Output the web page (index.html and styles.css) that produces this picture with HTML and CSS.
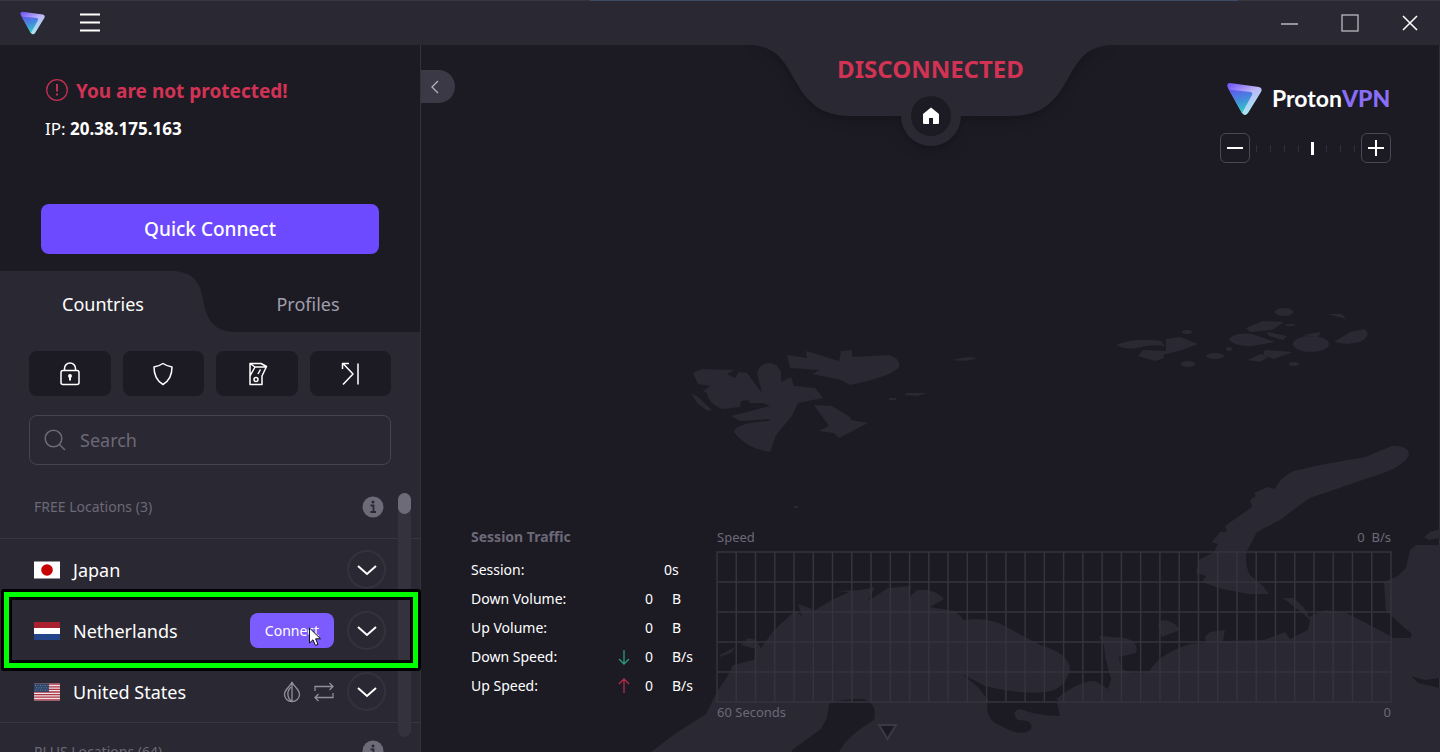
FILE: index.html
```html
<!DOCTYPE html>
<html lang="en">
<head>
<meta charset="utf-8">
<meta name="viewport" content="width=device-width, initial-scale=1">
<title>Proton VPN</title>
<link rel="stylesheet" href="styles.css">
</head>
<body>
<svg class="defs" aria-hidden="true">
  <defs>
    <linearGradient id="rim" x1="0" y1="0" x2="0.7" y2="1">
      <stop offset="0" stop-color="#6a4df5"/><stop offset="0.5" stop-color="#bdb4f8"/><stop offset="1" stop-color="#a4f3ee"/>
    </linearGradient>
    <linearGradient id="core" x1="0.3" y1="0" x2="0.6" y2="1">
      <stop offset="0" stop-color="#6157ee"/><stop offset="0.5" stop-color="#438bdc"/><stop offset="1" stop-color="#2fd0c0"/>
    </linearGradient>
    <symbol id="logo" viewBox="0 0 36 34">
      <path d="M3 1 32 5Q36 6 34 10L21 31Q18 35 15 31L1 6Q-1 1 3 1Z" fill="url(#rim)"/>
      <path d="M1 6Q2 8 5 8L24 10Q26 11 25 13L15 31 1 6Z" fill="url(#core)"/>
    </symbol>
    <symbol id="chevron" viewBox="0 0 20 12"><path d="M1 2 10 10 19 2" fill="none" stroke="currentColor" stroke-width="2"/></symbol>
    <symbol id="info" viewBox="0 0 22 22"><circle cx="11" cy="11" r="10.500" fill="#6e6b79"/><circle cx="11" cy="6" r="1.500" fill="#2a2832"/><path d="M8.500 9.500H11.500V16M8.500 16H14" fill="none" stroke="#2a2832" stroke-width="1.800"/></symbol>
  </defs>
</svg>

<header class="titlebar">
  <svg class="app-logo"><use href="#logo"/></svg>
  <button class="plain menu" aria-label="Menu"><svg width="20" height="19" viewBox="0 0 20 19"><path d="M0 1.500H20M0 9.500H20M0 17.500H20" stroke="#fff" stroke-width="2"/></svg></button>
  <div class="window-buttons">
    <button class="plain" aria-label="Minimize"><svg width="18" height="18"><path d="M0 10H17" stroke="#b9b8c0" stroke-width="1.500"/></svg></button>
    <button class="plain" aria-label="Maximize"><svg width="18" height="18"><rect x="1" y="1" width="16" height="16" fill="none" stroke="#b9b8c0" stroke-width="1.300"/></svg></button>
    <button class="plain" aria-label="Close"><svg width="18" height="18"><path d="M2 2 16 16M16 2 2 16" stroke="#fff" stroke-width="1.500"/></svg></button>
  </div>
</header>

<div class="layout">
  <aside class="sidebar">
    <section class="status">
      <p class="warning">
        <svg width="24" height="24" viewBox="0 0 24 24"><circle cx="12" cy="11" r="10.300" fill="none" stroke="#c23050" stroke-width="1.300"/><path d="M12 5V12.500M12 14.500V16.500" stroke="#d23354" stroke-width="1.800"/></svg>
        You are not protected!
      </p>
      <p class="ip">IP: <strong>20.38.175.163</strong></p>
      <button class="quick">Quick Connect</button>
    </section>

    <div class="tabs" role="tablist">
      <svg class="tab-shape" viewBox="0 0 420 61" preserveAspectRatio="none"><path d="M0 0H172C193 1 200 10 203 29 207 49 213 59 232 61H0Z" fill="#2a2832"/></svg>
      <button class="plain tab active" role="tab" aria-selected="true">Countries</button>
      <button class="plain tab" role="tab" aria-selected="false">Profiles</button>
    </div>

    <div class="features">
      <button aria-label="Secure Core"><svg width="22" height="24" viewBox="0 0 22 24"><rect x="2" y="8.500" width="18" height="14" rx="2"/><path d="M5.500 8.500V6.500a5.500 5.500 0 0 1 11 0V8.500"/><path d="M11 13V18.500" stroke-width="2"/><circle cx="11" cy="14" r="1.200" fill="#fff"/></svg></button>
      <button aria-label="NetShield"><svg width="22" height="24" viewBox="0 0 22 24"><path d="M11 1.500C8 3.500 5 4.500 2 5C2 13 5 19 11 22.500C17 19 20 13 20 5C17 4.500 14 3.500 11 1.500Z"/></svg></button>
      <button aria-label="Kill Switch"><svg width="22" height="24" viewBox="0 0 22 24"><path d="M4 1.500H15L20.500 4.500 16 14V22.500H4ZM4 1.500 9 5H20M9 5 4 14M14.500 7.500 12 12"/><circle cx="10" cy="17.500" r="2"/></svg></button>
      <button aria-label="Port Forwarding"><svg width="22" height="24" viewBox="0 0 22 24"><path d="M4 22.500 14 12 4 1.500M3.500 7V1.500H10M19 1.500V22.500"/></svg></button>
    </div>

    <label class="search">
      <svg width="22" height="22" viewBox="0 0 22 22"><circle cx="9.500" cy="9.500" r="8.300"/><path d="M15.500 15.500 21 21"/></svg>
      <input type="text" placeholder="Search" aria-label="Search">
    </label>

    <div class="locations">
      <div class="list">
        <div class="group"><span>FREE Locations (3)</span><button class="plain" aria-label="About free locations"><svg width="22" height="22"><use href="#info"/></svg></button></div>
        <div class="country">
          <svg class="flag" viewBox="0 0 26 17"><path fill="#fff" d="M0 0H26V17H0Z"/><circle cx="13" cy="8.500" r="5.800" fill="#c80000"/></svg>
          <span class="name">Japan</span>
          <button class="expand" aria-label="Expand Japan"><svg width="20" height="12"><use href="#chevron"/></svg></button>
        </div>
        <div class="country">
          <svg class="flag" viewBox="0 0 26 18"><path fill="#a9202f" d="M0 0H26V6H0Z"/><path fill="#fff" d="M0 6H26V12H0Z"/><path fill="#23468b" d="M0 12H26V18H0Z"/></svg>
          <span class="name">Netherlands</span>
          <button class="connect">Connect</button>
          <button class="expand" aria-label="Expand Netherlands"><svg width="20" height="12"><use href="#chevron"/></svg></button>
          <div class="highlight"></div>
          <svg class="cursor" viewBox="0 0 14 20"><path d="M1.500 1V16L5 12.800 7.500 18.500 10 17.300 7.600 11.800H12.500Z" fill="#fff" stroke="#111" stroke-width="1"/></svg>
        </div>
        <div class="country">
          <svg class="flag" viewBox="0 0 26 17"><path fill="#eee2e4" d="M0 0H26V17H0Z"/><path stroke="#ad3446" stroke-width="1.300" d="M0 .65H26M0 3.300H26M0 5.900H26M0 8.500H26M0 11.100H26M0 13.700H26M0 16.350H26"/><path fill="#2f4668" d="M0 0H15V8.500H0Z"/><path stroke="#8194ad" stroke-width=".8" stroke-dasharray="1 1.500" d="M1 2H15M2 4.300H15M1 6.600H15"/></svg>
          <span class="name">United States</span>
          <svg class="trait" width="18" height="22" viewBox="0 0 18 22"><path d="M9 1C8 5 1.500 8 1.500 13.500A7.500 7 0 0 0 16.500 13.500C16.500 8 10 5 9 1ZM9 1V20.500M8 6C5 9 4.500 12 5 14.500 5.500 17 6.500 19 8 20"/></svg>
          <svg class="trait" width="20" height="20" viewBox="0 0 20 20"><path d="M1 9V4.500H18.500M15.500 1 19 4.500 15.500 8M19 11V15.500H1.500M4.500 12 1 15.500 4.500 19"/></svg>
          <button class="expand" aria-label="Expand United States"><svg width="20" height="12"><use href="#chevron"/></svg></button>
        </div>
        <div class="group second"><span>PLUS Locations (64)</span><button class="plain" aria-label="About plus locations"><svg width="22" height="22"><use href="#info"/></svg></button></div>
      </div>
      <div class="scrollbar"><div class="thumb"></div></div>
    </div>
  </aside>

  <main class="stage">
    <svg class="map" viewBox="421 45 1019 707" preserveAspectRatio="xMidYMax slice" aria-hidden="true">
      <g fill="#2a2832">
        <path d="M693 373 702 369 735 370 727 374 735 378 739 372 747 373 762 393 757 373Q759 364 769 363 780 364 781 374V382L791 377 794 386 815 388 823 398 798 403 792 416 776 435 770 452Q745 448 734 432 736 423 769 421L770 419 740 421 731 416 770 406 763 403 750 403 748 400 741 401 740 407 722 409Q707 402 707 393L703 391 710 386 698 384Z"/>
        <path d="M691 393 698 397 712 410 708 411 697 403ZM787 355 807 358 806 351 839 361 841 351 852 350 852 357 888 355Q901 358 899 367 893 376 850 385L841 380 813 374 819 370 790 368Z"/>
        <path d="M814 405 832 406 850 417 851 420 868 423 839 438 834 433 819 431 829 426Z"/>
        <path d="M952 360Q965 356 977 358 968 362 952 360ZM906 393 927 393 917 396 905 395ZM889 398H896V400H889ZM794 506H798V508H794Z"/>
        <path d="M1116 345Q1135 337 1161 341L1165 346Q1150 344 1138 348 1125 350 1116 345ZM1166 339 1180 337 1198 344 1182 350 1163 355 1164 358 1155 361 1138 356 1143 350 1166 351Z"/>
        <ellipse cx="1187" cy="332" rx="5" ry="2"/><ellipse cx="1188" cy="364" rx="7" ry="3"/><ellipse cx="1215" cy="356" rx="9" ry="3"/><ellipse cx="1284" cy="312" rx="9" ry="4"/><ellipse cx="1311" cy="344" rx="18" ry="8"/><ellipse cx="1294" cy="364" rx="5" ry="2"/><ellipse cx="1229" cy="349" rx="3" ry="2"/><ellipse cx="1290" cy="325" rx="5" ry="1"/>
        <path d="M1229 339Q1235 332 1252 334L1275 342 1252 346Q1232 346 1229 339ZM1246 328 1263 321 1284 322 1272 330 1250 332ZM1267 332 1287 336 1283 340 1269 336ZM1265 350 1293 352 1274 359 1263 355ZM1248 360 1260 354 1268 357 1260 362ZM1302 335 1321 332 1318 337ZM1328 314 1342 314 1346 319ZM1334 342 1350 332 1364 329Q1373 335 1360 342L1347 344Z"/>
        <path d="M1392 446Q1408 445 1409 454 1406 464 1386 472L1310 498 1304 502 1280 520 1257 532 1247 551Q1244 563 1250 575L1263 586 1269 594 1249 594 1222 589 1202 582 1206 576 1196 573 1199 560 1214 552 1218 544 1212 542 1220 532 1227 532 1225 526 1252 507 1250 500 1256 496 1254 493 1268 487 1275 489Q1280 477 1294 471L1320 465 1365 457Z"/>
        <path d="M1283 598 1293 598Q1305 606 1309 617L1325 610 1346 613 1366 623 1394 638 1410 638 1412 634 1405 628 1386 611 1384 582 1398 576 1406 568 1410 550 1416 545H1440V678L1425 680 1411 676 1418 683 1440 688V752H1088L1061 703 1056 699Q1080 680 1095 681L1108 689 1111 679 1105 657 1104 645 1099 636 1125 638Q1140 642 1136 653L1119 657 1121 668Q1130 676 1149 672 1158 654 1190 644L1206 643 1205 637 1210 632 1225 630 1223 641 1264 640 1285 632 1290 639 1308 630 1310 620 1301 612Z"/>
        <path d="M1158 626Q1158 620 1165 620 1175 622 1180 630L1162 637Z"/><path d="M1424 537 1430 532 1440 529V538L1429 540Z"/>
        <path d="M651 752 676 733 706 714 718 690 727 677 733 665 754 660 756 649 741 645 748 638 756 640 761 648 774 630 795 611 802 616 798 604 815 610 832 600 849 592 834 591 860 590 875 587 868 601 888 588 911 586 909 598 917 590Q934 588 944 599L930 607 955 611 964 620Q983 617 1001 624L1040 645Q1069 653 1070 669 1067 686 1051 691 1026 696 985 686L962 674 978 687 988 700Q984 720 1001 726 1023 738 1031 729 1034 720 1018 720 1010 712 1020 709 1038 716 1060 716L1057 702 1100 699 1130 752H839Q847 736 874 720 878 702 861 699 840 699 829 704L827 718 821 729 792 750V752Z"/>
        <path d="M720 655 735 647 731 653 720 657Z"/>
      </g>
      <path d="M879 725H896L887.500 739Z" fill="#1c1b24" stroke="#3b3945" stroke-width="2"/>
    </svg>

    <button class="collapse" aria-label="Collapse sidebar"><svg width="10" height="14" viewBox="0 0 10 14"><path d="M8 1 2 7 8 13" fill="none" stroke="#b5b3bd" stroke-width="1.300"/></svg></button>

    <div class="notch">
      <svg class="notch-shape" viewBox="0 0 380 112"><path d="M0 0H11C37 2 44 18 55 37 70 64 86 71 112 71H160A30 30 0 0 0 220 71H268C294 71 310 64 325 37 336 18 343 2 369 0H380Z" fill="#2a2832"/></svg>
      <span class="state">DISCONNECTED</span>
      <button class="home" aria-label="Home"><svg width="18" height="18" viewBox="0 0 18 18"><path d="M9 .5 17 7V16Q17 17 16 17H11V11H7V17H2Q1 17 1 16V7Z" fill="#fff"/></svg></button>
    </div>

    <div class="corner">
      <div class="brand"><svg class="brand-logo"><use href="#logo"/></svg><span>Proton<b>VPN</b></span></div>
      <div class="zoom">
        <button aria-label="Zoom out"><svg width="16" height="16"><path d="M0 8H16" stroke="#fff" stroke-width="2"/></svg></button>
        <input type="range" min="0" max="7" value="4" aria-label="Zoom level">
        <button aria-label="Zoom in"><svg width="16" height="16"><path d="M0 8H16M8 0V16" stroke="#fff" stroke-width="2"/></svg></button>
      </div>
    </div>

    <section class="traffic">
      <div class="stats">
        <h2>Session Traffic</h2>
        <table>
          <colgroup><col class="col-label"><col class="col-arrow"><col class="col-value"><col></colgroup>
          <tbody>
            <tr><th>Session:</th><td class="duration" colspan="3">0s</td></tr>
            <tr><th>Down Volume:</th><td></td><td>0</td><td>B</td></tr>
            <tr><th>Up Volume:</th><td></td><td>0</td><td>B</td></tr>
            <tr><th>Down Speed:</th><td><svg width="12" height="16" viewBox="0 0 12 16"><path d="M6 1V15M1 10 6 15 11 10" stroke="#2b9a80"/></svg></td><td>0</td><td>B/s</td></tr>
            <tr><th>Up Speed:</th><td><svg width="12" height="16" viewBox="0 0 12 16"><path d="M6 15V1M1 6 6 1 11 6" stroke="#b52c4d"/></svg></td><td>0</td><td>B/s</td></tr>
          </tbody>
        </table>
      </div>
      <div class="graph">
        <div class="caption"><span>Speed</span><span class="rate">0&nbsp; B/s</span></div>
        <svg class="grid" viewBox="0 0 35 5" preserveAspectRatio="none"><path vector-effect="non-scaling-stroke" d="M0 0H35V5H0ZM0 1H35M0 2H35M0 3H35M0 4H35M1 0V5M2 0V5M3 0V5M4 0V5M5 0V5M6 0V5M7 0V5M8 0V5M9 0V5M10 0V5M11 0V5M12 0V5M13 0V5M14 0V5M15 0V5M16 0V5M17 0V5M18 0V5M19 0V5M20 0V5M21 0V5M22 0V5M23 0V5M24 0V5M25 0V5M26 0V5M27 0V5M28 0V5M29 0V5M30 0V5M31 0V5M32 0V5M33 0V5M34 0V5"/></svg>
        <div class="caption"><span>60 Seconds</span><span>0</span></div>
      </div>
    </section>
  </main>
</div>
</body>
</html>
```
FILE: styles.css
```css
:root {
  --dark: #1c1b24;
  --panel: #2a2832;
  --line: #383641;
  --muted: #6c6978;
  --red: #d23354;
  --purple: #6d4aff;
}

* { box-sizing: border-box; }

body {
  margin: 0;
  height: 100vh;
  display: flex;
  flex-direction: column;
  overflow: hidden;
  background: var(--dark);
  color: #fff;
  font-family: "Noto Sans", "Open Sans", sans-serif;
  font-size: 18px;
}

button, input { font: inherit; color: inherit; }
button { cursor: pointer; padding: 0; border: 0; display: flex; align-items: center; justify-content: center; }
svg { display: block; flex: none; }
.plain { background: none; }
.defs { position: absolute; width: 0; height: 0; }

.titlebar {
  flex: none;
  height: 45px;
  display: flex;
  align-items: center;
  padding: 0 21px 0 20px;
  background: linear-gradient(90deg, #373540 41%, #3d4b64 41% 86%, #373540 86%) top / 100% 1px no-repeat var(--panel);
}
.app-logo { width: 26px; height: 24px; }
.menu { margin-left: 34px; }
.window-buttons { display: flex; gap: 42px; margin-left: auto; }

.layout { flex: 1; min-height: 0; display: flex; }

.sidebar {
  flex: none;
  width: 421px;
  display: flex;
  flex-direction: column;
  overflow: hidden;
  background: linear-gradient(90deg, transparent 420px, #34323d 420px), var(--panel);
}

.status {
  height: 226px;
  flex: none;
  margin-right: 1px;
  padding: 32px 41px 17px 41px;
  display: flex;
  flex-direction: column;
  background: var(--dark);
}
.status p { margin: 0; }
.warning { display: flex; align-items: center; gap: 7px; padding-left: 4px; font-size: 19px; line-height: 28px; color: var(--red); font-weight: 700; }
.status .warning { padding-left: 4px; }
.ip { padding: 12px 4px; font-size: 17px; line-height: 24px; }
.quick { height: 50px; margin-top: auto; border-radius: 8px; background: var(--purple); font-size: 19px; font-weight: 500; }

.tabs { position: relative; flex: none; height: 61px; margin-right: 1px; display: grid; grid-template-columns: 206px 1fr; background: var(--dark); }
.tab-shape { position: absolute; inset: 0; width: 100%; height: 100%; }
.tab { position: relative; padding-top: 4px; color: #a09eab; }
.tab:not(.active) { padding-right: 10px; }
.tab.active { color: #fff; }

.features { flex: none; display: grid; grid-template-columns: repeat(4, 1fr); gap: 12px; padding: 19px 30px 19px 29px; }
.features button { height: 45px; border-radius: 8px; background: var(--dark); }
.features svg { fill: none; stroke: #fff; stroke-width: 1.500; stroke-linejoin: round; }

.search { flex: none; height: 50px; margin: 0 30px 0 29px; padding: 0 14px; display: flex; align-items: center; gap: 14px; border: 1px solid #464452; border-radius: 8px; }
.search svg { fill: none; stroke: var(--muted); stroke-width: 1.500; }
.search input { flex: 1; min-width: 0; padding: 0; border: 0; outline: 0; background: none; }
.search input::placeholder { color: var(--muted); opacity: 1; }

.locations { flex: 1; min-height: 0; position: relative; margin-top: 12px; overflow: hidden; }
.group { height: 62px; padding: 0 37px 2px 34px; display: flex; align-items: center; justify-content: space-between; border-bottom: 1px solid var(--line); font-size: 14px; color: var(--muted); }
.group.second { border-top: 1px solid var(--line); padding-bottom: 4px; }
.country { position: relative; height: 61px; padding: 0 35px 0 34px; display: flex; align-items: center; gap: 13px; }
.flag { width: 26px; height: 18px; }
.name { flex: 1; }
.expand { width: 39px; height: 39px; border-radius: 50%; border: 2px solid #34323d; background: none; }
.connect { width: 84px; height: 35px; border-radius: 8px; background: #7c5cff; font-size: 14px; }
.trait { fill: none; stroke: #918f9a; stroke-width: 1.300; }
.highlight { position: absolute; z-index: 1; inset: -11px 0 -10px 1px; border: 3px solid #000; border-radius: 3px; box-shadow: inset 0 0 0 5px #00ff00, inset 0 0 0 8px #000; pointer-events: none; }
.cursor { position: absolute; z-index: 1; left: 308px; top: 27px; width: 14px; height: 20px; }
.scrollbar { position: absolute; right: 10px; top: 16px; bottom: 15px; width: 13px; border-radius: 7px; background: #34323d; }
.thumb { height: 21px; border-radius: 7px; background: #6e6b79; }

.stage { flex: 1; min-width: 0; position: relative; display: flex; flex-direction: column; justify-content: space-between; overflow: hidden; box-shadow: inset -1px 0 #302e39; }
.map { position: absolute; inset: 0; width: 100%; height: 100%; }
.collapse { position: absolute; left: 0; top: 25px; width: 34px; height: 33px; padding-right: 6px; border-radius: 0 17px 17px 0; background: #3b3945; }

.notch { position: absolute; left: 50%; top: 0; width: 380px; margin-left: -190px; display: flex; flex-direction: column; align-items: center; }
.notch-shape { position: absolute; top: 0; width: 380px; height: 112px; filter: drop-shadow(0 4px 5px #15141b); }
.state { position: relative; padding-top: 6px; line-height: 36px; font-size: 24px; font-weight: 700; color: var(--red); }
.home { position: relative; width: 40px; height: 40px; margin-top: 9px; border-radius: 50%; background: var(--dark); }

.corner { position: relative; align-self: flex-end; padding: 36px 49px 0 0; display: flex; flex-direction: column; gap: 17px; }
.brand { display: flex; align-items: center; gap: 9px; padding-left: 7px; font: 700 23px/35px Lato, sans-serif; }
.brand-logo { width: 36px; height: 34px; }
.brand b { color: #8a6ef6; }
.zoom { display: flex; align-items: center; justify-content: space-between; }
.zoom button { width: 30px; height: 30px; border: 1px solid #4a4852; border-radius: 6px; background: none; }
.zoom input { appearance: none; width: 101px; height: 14px; margin: 0 5px; background: repeating-linear-gradient(90deg, #302e38 0 1px, transparent 1px 14px) 1px center / 100% 7px no-repeat; }
.zoom input::-webkit-slider-thumb { appearance: none; width: 3px; height: 13px; border: 0; border-radius: 0; background: #fff; }

.traffic { position: relative; display: flex; gap: 20px; padding: 0 49px 30px 50px; font-size: 14px; }
.stats { flex: none; width: 226px; }
.stats h2 { margin: 0; font-size: 14px; line-height: 20px; font-weight: 700; color: var(--muted); }
.stats table { width: 100%; margin-top: 8px; border-collapse: collapse; table-layout: fixed; }
.stats tr { height: 29px; }
.stats th, .stats td { padding: 0; text-align: left; font-weight: 400; }
.col-label { width: 147px; }
.col-arrow { width: 27px; }
.col-value { width: 27px; }
.stats .duration { padding-left: 46px; }
.stats td svg { fill: none; stroke-width: 1.300; }
.graph { flex: 1; min-width: 0; }
.caption { display: flex; justify-content: space-between; line-height: 20px; font-size: 13px; color: var(--muted); }
.grid { width: 100%; height: 150px; margin: 5px 0 0; overflow: visible; }
.grid path { fill: none; stroke: #35333e; stroke-width: 1.500; }
```
